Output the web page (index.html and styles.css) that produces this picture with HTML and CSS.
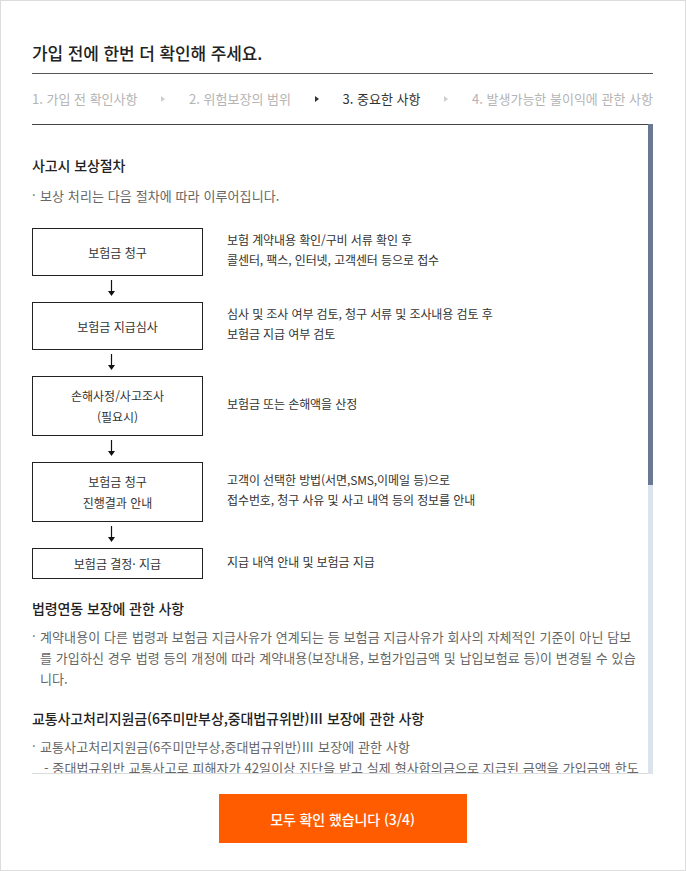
FILE: index.html
```html
<!DOCTYPE html>
<html lang="ko">
<head>
<meta charset="utf-8">
<title>가입 전에 한번 더 확인해 주세요.</title>
<link rel="stylesheet" href="styles.css">
</head>
<body>
<div class="page">
  <h1 class="title">가입 전에 한번 더 확인해 주세요.</h1>
  <ol class="steps">
    <li class="step">1. 가입 전 확인사항</li>
    <li class="sep"></li>
    <li class="step">2. 위험보장의 범위</li>
    <li class="sep sep-on"></li>
    <li class="step step-on">3. 중요한 사항</li>
    <li class="sep"></li>
    <li class="step">4. 발생가능한 불이익에 관한 사항</li>
  </ol>
  <div class="scrollbox">
    <div class="content">
      <h2 class="sec-title first">사고시 보상절차</h2>
      <p class="bullet">보상 처리는 다음 절차에 따라 이루어집니다.</p>

      <div class="flow">
        <div class="row">
          <div class="box">보험금 청구</div>
          <div class="desc">보험 계약내용 확인/구비 서류 확인 후<br>콜센터, 팩스, 인터넷, 고객센터 등으로 접수</div>
        </div>
        <div class="arrow"><svg width="9" height="17" viewBox="0 0 9 17"><line x1="4.5" y1="0" x2="4.5" y2="12" stroke="#111" stroke-width="1.2"/><polygon points="1,11 8,11 4.5,16" fill="#111"/></svg></div>
        <div class="row">
          <div class="box">보험금 지급심사</div>
          <div class="desc">심사 및 조사 여부 검토, 청구 서류 및 조사내용 검토 후<br>보험금 지급 여부 검토</div>
        </div>
        <div class="arrow"><svg width="9" height="17" viewBox="0 0 9 17"><line x1="4.5" y1="0" x2="4.5" y2="12" stroke="#111" stroke-width="1.2"/><polygon points="1,11 8,11 4.5,16" fill="#111"/></svg></div>
        <div class="row">
          <div class="box box-tall">손해사정/사고조사<br>(필요시)</div>
          <div class="desc">보험금 또는 손해액을 산정</div>
        </div>
        <div class="arrow"><svg width="9" height="17" viewBox="0 0 9 17"><line x1="4.5" y1="0" x2="4.5" y2="12" stroke="#111" stroke-width="1.2"/><polygon points="1,11 8,11 4.5,16" fill="#111"/></svg></div>
        <div class="row">
          <div class="box box-tall">보험금 청구<br>진행결과 안내</div>
          <div class="desc">고객이 선택한 방법(서면,SMS,이메일 등)으로<br>접수번호, 청구 사유 및 사고 내역 등의 정보를 안내</div>
        </div>
        <div class="arrow"><svg width="9" height="17" viewBox="0 0 9 17"><line x1="4.5" y1="0" x2="4.5" y2="12" stroke="#111" stroke-width="1.2"/><polygon points="1,11 8,11 4.5,16" fill="#111"/></svg></div>
        <div class="row">
          <div class="box box-short">보험금 결정· 지급</div>
          <div class="desc">지급 내역 안내 및 보험금 지급</div>
        </div>
      </div>

      <h2 class="sec-title">법령연동 보장에 관한 사항</h2>
      <p class="bullet para">계약내용이 다른 법령과 보험금 지급사유가 연계되는 등 보험금 지급사유가 회사의 자체적인 기준이 아닌 담보를 가입하신 경우 법령 등의 개정에 따라 계약내용(보장내용, 보험가입금액 및 납입보험료 등)이 변경될 수 있습니다.</p>

      <h2 class="sec-title">교통사고처리지원금(6주미만부상,중대법규위반)Ⅲ 보장에 관한 사항</h2>
      <div class="bullet para">교통사고처리지원금(6주미만부상,중대법규위반)Ⅲ 보장에 관한 사항
        <p class="sub">- 중대법규위반 교통사고로 피해자가 42일이상 진단을 받고 실제 형사합의금으로 지급된 금액을 가입금액 한도로 보상합니다.</p>
      </div>
    </div>
    <div class="scrollbar"><div class="thumb"></div></div>
  </div>
  <div class="actions">
    <button class="btn-confirm" type="button">모두 확인 했습니다 (3/4)</button>
  </div>
</div>
</body>
</html>
```
FILE: styles.css
```css
* { box-sizing: border-box; }
html, body { margin: 0; padding: 0; background: #fff; }
body {
  font-family: "Noto Sans CJK KR", "Noto Sans", sans-serif;
  color: #333;
}
.page {
  width: 686px;
  height: 871px;
  border: 1px solid #dcdcdc;
  padding: 0 32px 0 31px;
  display: flex;
  flex-direction: column;
}
.title {
  margin: 39px 0 0;
  padding-bottom: 7px;
  font-size: 17px;
  line-height: 26px;
  font-weight: 500;
  letter-spacing: -0.1px;
  color: #222;
  border-bottom: 1px solid #555;
}
.steps {
  list-style: none;
  margin: 15px 0 0;
  padding: 0;
  display: flex;
  justify-content: space-between;
  align-items: center;
  height: 20px;
}
.step {
  font-size: 13px;
  line-height: 20px;
  letter-spacing: 0;
  color: #b4b4b4;
}
.step-on { color: #333; }
.sep {
  width: 0;
  height: 0;
  border-left: 4px solid #cfcfcf;
  border-top: 3px solid transparent;
  border-bottom: 3px solid transparent;
}
.sep-on { border-left-color: #333; }
.scrollbox {
  margin-top: 15px;
  height: 650px;
  display: flex;
}
.content {
  flex: 1;
  overflow: hidden;
  border-top: 1px solid #444;
  border-bottom: 1px solid #dcdcdc;
  padding: 30px 8px 0 0;
}
.scrollbar {
  width: 5px;
  background: #dde3eb;
  display: flex;
  flex-direction: column;
}
.thumb {
  height: 361px;
  background: #6b7891;
}
.sec-title {
  margin: 19px 0 0;
  font-size: 14px;
  line-height: 20px;
  font-weight: 500;
  letter-spacing: -0.1px;
  color: #222;
}
.sec-title.first { margin-top: 0; }
.bullet {
  position: relative;
  margin: 10px 0 0;
  padding-left: 8px;
  font-size: 13px;
  line-height: 21px;
  letter-spacing: 0.1px;
  color: #666;
  word-break: break-all;
}
.bullet::before {
  content: "·";
  position: absolute;
  left: 0;
  top: -1px;
  color: #666;
}
.para { margin-top: 8px; }
.sub {
  margin: 0;
  padding-left: 4px;
}
.flow {
  margin-top: 22px;
  display: flex;
  flex-direction: column;
}
.row {
  display: flex;
  align-items: center;
  gap: 24px;
}
.box {
  width: 171px;
  height: 48px;
  border: 1px solid #222;
  display: flex;
  align-items: center;
  justify-content: center;
  text-align: center;
  font-size: 12px;
  line-height: 21px;
  letter-spacing: 0;
  color: #333;
}
.box-tall { height: 60px; }
.box-short { height: 31px; }
.desc {
  font-size: 12px;
  line-height: 20px;
  letter-spacing: -0.1px;
  color: #333;
  margin-top: -4px;
}
.arrow {
  height: 26px;
  padding: 4px 0 0 75px;
}
.arrow svg { display: block; }
.actions {
  display: flex;
  justify-content: center;
  margin-top: 20px;
}
.btn-confirm {
  width: 248px;
  height: 49px;
  border: 0;
  background: #ff5c00;
  color: #fff;
  font-family: "Noto Sans CJK KR", "Noto Sans", sans-serif;
  font-size: 14px;
  letter-spacing: -0.1px;
  font-weight: 500;
  padding: 0;
}
```
